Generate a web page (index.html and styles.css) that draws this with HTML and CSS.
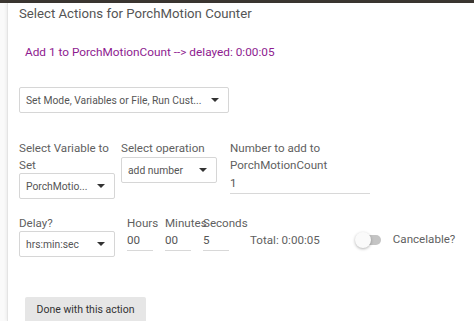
FILE: index.html
```html
<!DOCTYPE html>
<html lang="en">
<head>
    <meta charset="UTF-8">
    <title>Select Actions</title>
    <link rel="stylesheet" href="styles.css">
</head>
<body>
    <div class="topbar"></div>
    <div class="panel">
        <h1 class="title">Select Actions for PorchMotion Counter</h1>
        <p class="summary">Add 1 to PorchMotionCount --&gt; delayed: 0:00:05</p>

        <div class="select wide">
            <span>Set Mode, Variables or File, Run Cust...</span>
            <span class="arrow"></span>
        </div>

        <div class="row vars">
            <div class="field col-a">
                <label>Select Variable to Set</label>
                <div class="select">
                    <span>PorchMotio...</span>
                    <span class="arrow"></span>
                </div>
            </div>
            <div class="field col-b">
                <label>Select operation</label>
                <div class="select">
                    <span>add number</span>
                    <span class="arrow"></span>
                </div>
            </div>
            <div class="field col-c">
                <label>Number to add to<br>PorchMotionCount</label>
                <div class="text-input">1</div>
            </div>
        </div>

        <div class="row delay">
            <div class="field col-a">
                <label>Delay?</label>
                <div class="select">
                    <span>hrs:min:sec</span>
                    <span class="arrow"></span>
                </div>
            </div>
            <div class="field time">
                <label>Hours</label>
                <div class="text-input">00</div>
            </div>
            <div class="field time">
                <label>Minutes</label>
                <div class="text-input">00</div>
            </div>
            <div class="field time">
                <label>Seconds</label>
                <div class="text-input">5</div>
            </div>
            <div class="total">Total: 0:00:05</div>
            <div class="toggle">
                <span class="track"></span>
                <span class="thumb"></span>
            </div>
            <div class="toggle-label">Cancelable?</div>
        </div>

        <button class="done">Done with this action</button>
    </div>
</body>
</html>
```

FILE: styles.css
```css
/* base */
body {
    margin: 0;
    font-family: 'Roboto', 'Liberation Sans', sans-serif;
    background-color: #fafafa;
    color: #5f5f5f;
    height: 321px;
    overflow: hidden;
}

.topbar {
    height: 3px;
    background-color: #3b3631;
}

.panel {
    margin-left: 7px;
    height: 318px;
    background-color: #fff;
    border-left: 1px solid #e4e4e4;
    box-shadow: -1px 0 3px rgba(0, 0, 0, 0.06);
    padding: 0 11px;
}

.title {
    margin: 0;
    padding-top: 1px;
    font-size: 13.2px;
    font-weight: normal;
    line-height: 20px;
    color: #555;
}

.summary {
    margin: 0;
    padding: 19px 0 0 6px;
    font-size: 11.8px;
    line-height: 18px;
    color: #8e1b90;
}

.select {
    box-sizing: border-box;
    height: 26px;
    border: 1px solid #d6d6d6;
    border-radius: 2px;
    display: flex;
    align-items: center;
    justify-content: space-between;
    padding: 0 9px 0 6px;
    font-size: 10.3px;
    color: #555;
    background-color: #fff;
    white-space: nowrap;
}

.select.wide {
    width: 210px;
    margin-top: 26px;
}

.arrow {
    width: 0;
    height: 0;
    border-left: 4px solid transparent;
    border-right: 4px solid transparent;
    border-top: 4px solid #333;
}

.row {
    display: flex;
    align-items: flex-start;
    white-space: nowrap;
}

.vars {
    margin-top: 27px;
}

.field label {
    display: block;
    font-size: 11.6px;
    line-height: 17px;
    color: #5f5f5f;
    white-space: normal;
}

.time label {
    white-space: nowrap;
}

.col-a {
    width: 96px;
    flex-shrink: 0;
}

.col-b {
    width: 96px;
    margin-left: 6px;
    flex-shrink: 0;
}

.col-c {
    width: 140px;
    margin-left: 13px;
}

.col-a .select {
    margin-top: -1px;
}

.text-input {
    height: 18px;
    font-size: 11.6px;
    line-height: 18px;
    border-bottom: 1px solid #d8d8d8;
    color: #555;
    padding-bottom: 1px;
}

.delay {
    margin-top: 16px;
}

.time {
    width: 26px;
    margin-left: 12px;
    flex-shrink: 0;
}

.time .text-input {
    margin-top: -1px;
}

.total {
    margin: 16px 0 0 21px;
    font-size: 11.6px;
    line-height: 18px;
    color: #5f5f5f;
}

.toggle {
    position: relative;
    width: 26px;
    height: 16px;
    margin: 17px 0 0 35px;
    flex-shrink: 0;
}

.track {
    position: absolute;
    left: 6px;
    top: 3px;
    width: 20px;
    height: 10px;
    border-radius: 5px;
    background-color: #c4c4c4;
}

.thumb {
    position: absolute;
    left: 0;
    top: 0;
    width: 16px;
    height: 16px;
    border-radius: 50%;
    background-color: #fafafa;
    box-shadow: 0 1px 3px rgba(0, 0, 0, 0.3);
}

.toggle-label {
    margin: 15px 0 0 12px;
    font-size: 11.6px;
    line-height: 18px;
    color: #5f5f5f;
}

.done {
    display: block;
    margin: 40px 0 0 6px;
    width: 121px;
    height: 30px;
    border: none;
    border-radius: 2px;
    background-color: #e6e6e6;
    font-family: 'Roboto', 'Liberation Sans', sans-serif;
    font-size: 10.5px;
    color: #333;
    padding: 0 0 6px;
}
```
